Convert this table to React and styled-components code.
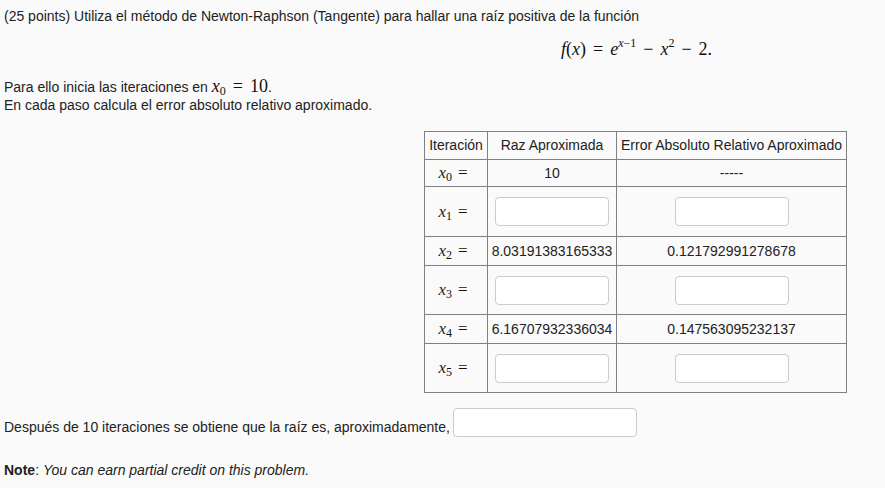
import React from "react";
import styled, { createGlobalStyle } from "styled-components";

const Global = createGlobalStyle`
  html, body {
    margin: 0;
    padding: 0;
    background: #fafafa;
  }
  body {
    font-family: "Liberation Sans", Arial, sans-serif;
    font-size: 14px;
    color: #222;
  }
`;

const Problem = styled.div`
  padding: 7px 4px 0 4px;
  width: 877px;
  line-height: 19px;
`;

const Line = styled.div`
  white-space: nowrap;
  height: 19px;
`;

const Display = styled.div`
  white-space: nowrap;
  padding: 14px 0 0 557px;
  height: 48px;
  box-sizing: border-box;
  line-height: 19px;
`;

const M = styled.span`
  font-family: "Liberation Serif", "Times New Roman", serif;
  font-size: ${(p) => p.$size || 18}px;
  font-style: ${(p) => (p.$up ? "normal" : "italic")};
  color: #111;
`;

const Sub = styled.span`
  font-family: "Liberation Serif", "Times New Roman", serif;
  font-size: 12px;
  font-style: normal;
  position: relative;
  top: 3px;
  line-height: 0;
  color: #111;
`;

const Sup = styled.span`
  font-size: 12px;
  position: relative;
  top: -8px;
  line-height: 0;
`;

const Op = styled.span`
  font-family: "Liberation Serif", "Times New Roman", serif;
  font-style: normal;
  font-size: ${(p) => p.$size || 18}px;
  color: #111;
  padding: 0 ${(p) => p.$pad ?? 5}px;
`;

const Intro = styled.div`
  margin-top: 3px;
`;

const TableWrap = styled.div`
  display: flex;
  padding: 16px 0 0 420px;
`;

const Table = styled.table`
  border-collapse: collapse;
  border: 1px solid #808080;
  font-size: 14px;
`;

const Th = styled.th`
  border: 1px solid #808080;
  font-weight: 400;
  padding: 0;
  width: ${(p) => p.$w}px;
  height: 27px;
  white-space: nowrap;
  color: #222;
`;

const Td = styled.td`
  border: 1px solid #808080;
  text-align: center;
  padding: 0 1px;
  height: ${(p) => p.$h || 28}px;
  white-space: nowrap;
  color: #222;
`;

const Label = styled.span`
  font-family: "Liberation Serif", "Times New Roman", serif;
  font-size: 17px;
  font-style: italic;
  color: #222;
`;

const Box = styled.input`
  width: ${(p) => p.$w || 114}px;
  height: 29px;
  box-sizing: border-box;
  border: 1px solid #ccc;
  border-radius: 4px;
  background: #fff;
  vertical-align: middle;
  margin: 0;
`;

const Answer = styled.div`
  display: flex;
  align-items: flex-end;
  gap: 3px;
  margin-top: 15px;
`;

const Note = styled.div`
  margin-top: 24px;
`;

function X({ n }) {
  return (
    <Label>
      x<Sub>{n}</Sub>
      <Op $pad={6} $size={17}>=</Op>
    </Label>
  );
}

const rows = [
  { n: 0, h: 26, a: "10", b: "-----" },
  { n: 1, h: 49, input: true },
  { n: 2, h: 28, a: "8.03191383165333", b: "0.121792991278678" },
  { n: 3, h: 48, input: true },
  { n: 4, h: 28, a: "6.16707932336034", b: "0.147563095232137" },
  { n: 5, h: 48, input: true },
];

export default function App() {
  return (
    <>
      <Global />
      <Problem>
        <Line>
          (25 points) Utiliza el método de Newton-Raphson (Tangente) para hallar
          una raíz positiva de la función
        </Line>
        <Display>
          <M>f</M>
          <M $up>(</M>
          <M>x</M>
          <M $up>)</M>
          <Op $pad={7}>=</Op>
          <M>e</M>
          <Sup>
            <M $size={12}>x</M>
            <M $up $size={12}>−1</M>
          </Sup>
          <Op $pad={7}>−</Op>
          <M>x</M>
          <Sup>
            <M $up $size={12}>2</M>
          </Sup>
          <Op $pad={7}>−</Op>
          <M $up>2.</M>
        </Display>
        <Intro>
          <Line>
            Para ello inicia las iteraciones en <M>x</M>
            <Sub>0</Sub>
            <Op $pad={7}>=</Op>
            <M $up>10</M>.
          </Line>
          <Line>En cada paso calcula el error absoluto relativo aproximado.</Line>
        </Intro>
        <TableWrap>
          <Table>
            <thead>
              <tr>
                <Th $w={62}>Iteración</Th>
                <Th $w={128}>Raz Aproximada</Th>
                <Th $w={229}>Error Absoluto Relativo Aproximado</Th>
              </tr>
            </thead>
            <tbody>
              {rows.map((r) => (
                <tr key={r.n}>
                  <Td $h={r.h}>
                    <X n={r.n} />
                  </Td>
                  <Td $h={r.h}>{r.input ? <Box /> : r.a}</Td>
                  <Td $h={r.h}>{r.input ? <Box /> : r.b}</Td>
                </tr>
              ))}
            </tbody>
          </Table>
        </TableWrap>
        <Answer>
          <span>
            Después de 10 iteraciones se obtiene que la raíz es, aproximadamente,
          </span>
          <Box $w={184} />
        </Answer>
        <Note>
          <b>Note</b>: <i>You can earn partial credit on this problem.</i>
        </Note>
      </Problem>
    </>
  );
}
